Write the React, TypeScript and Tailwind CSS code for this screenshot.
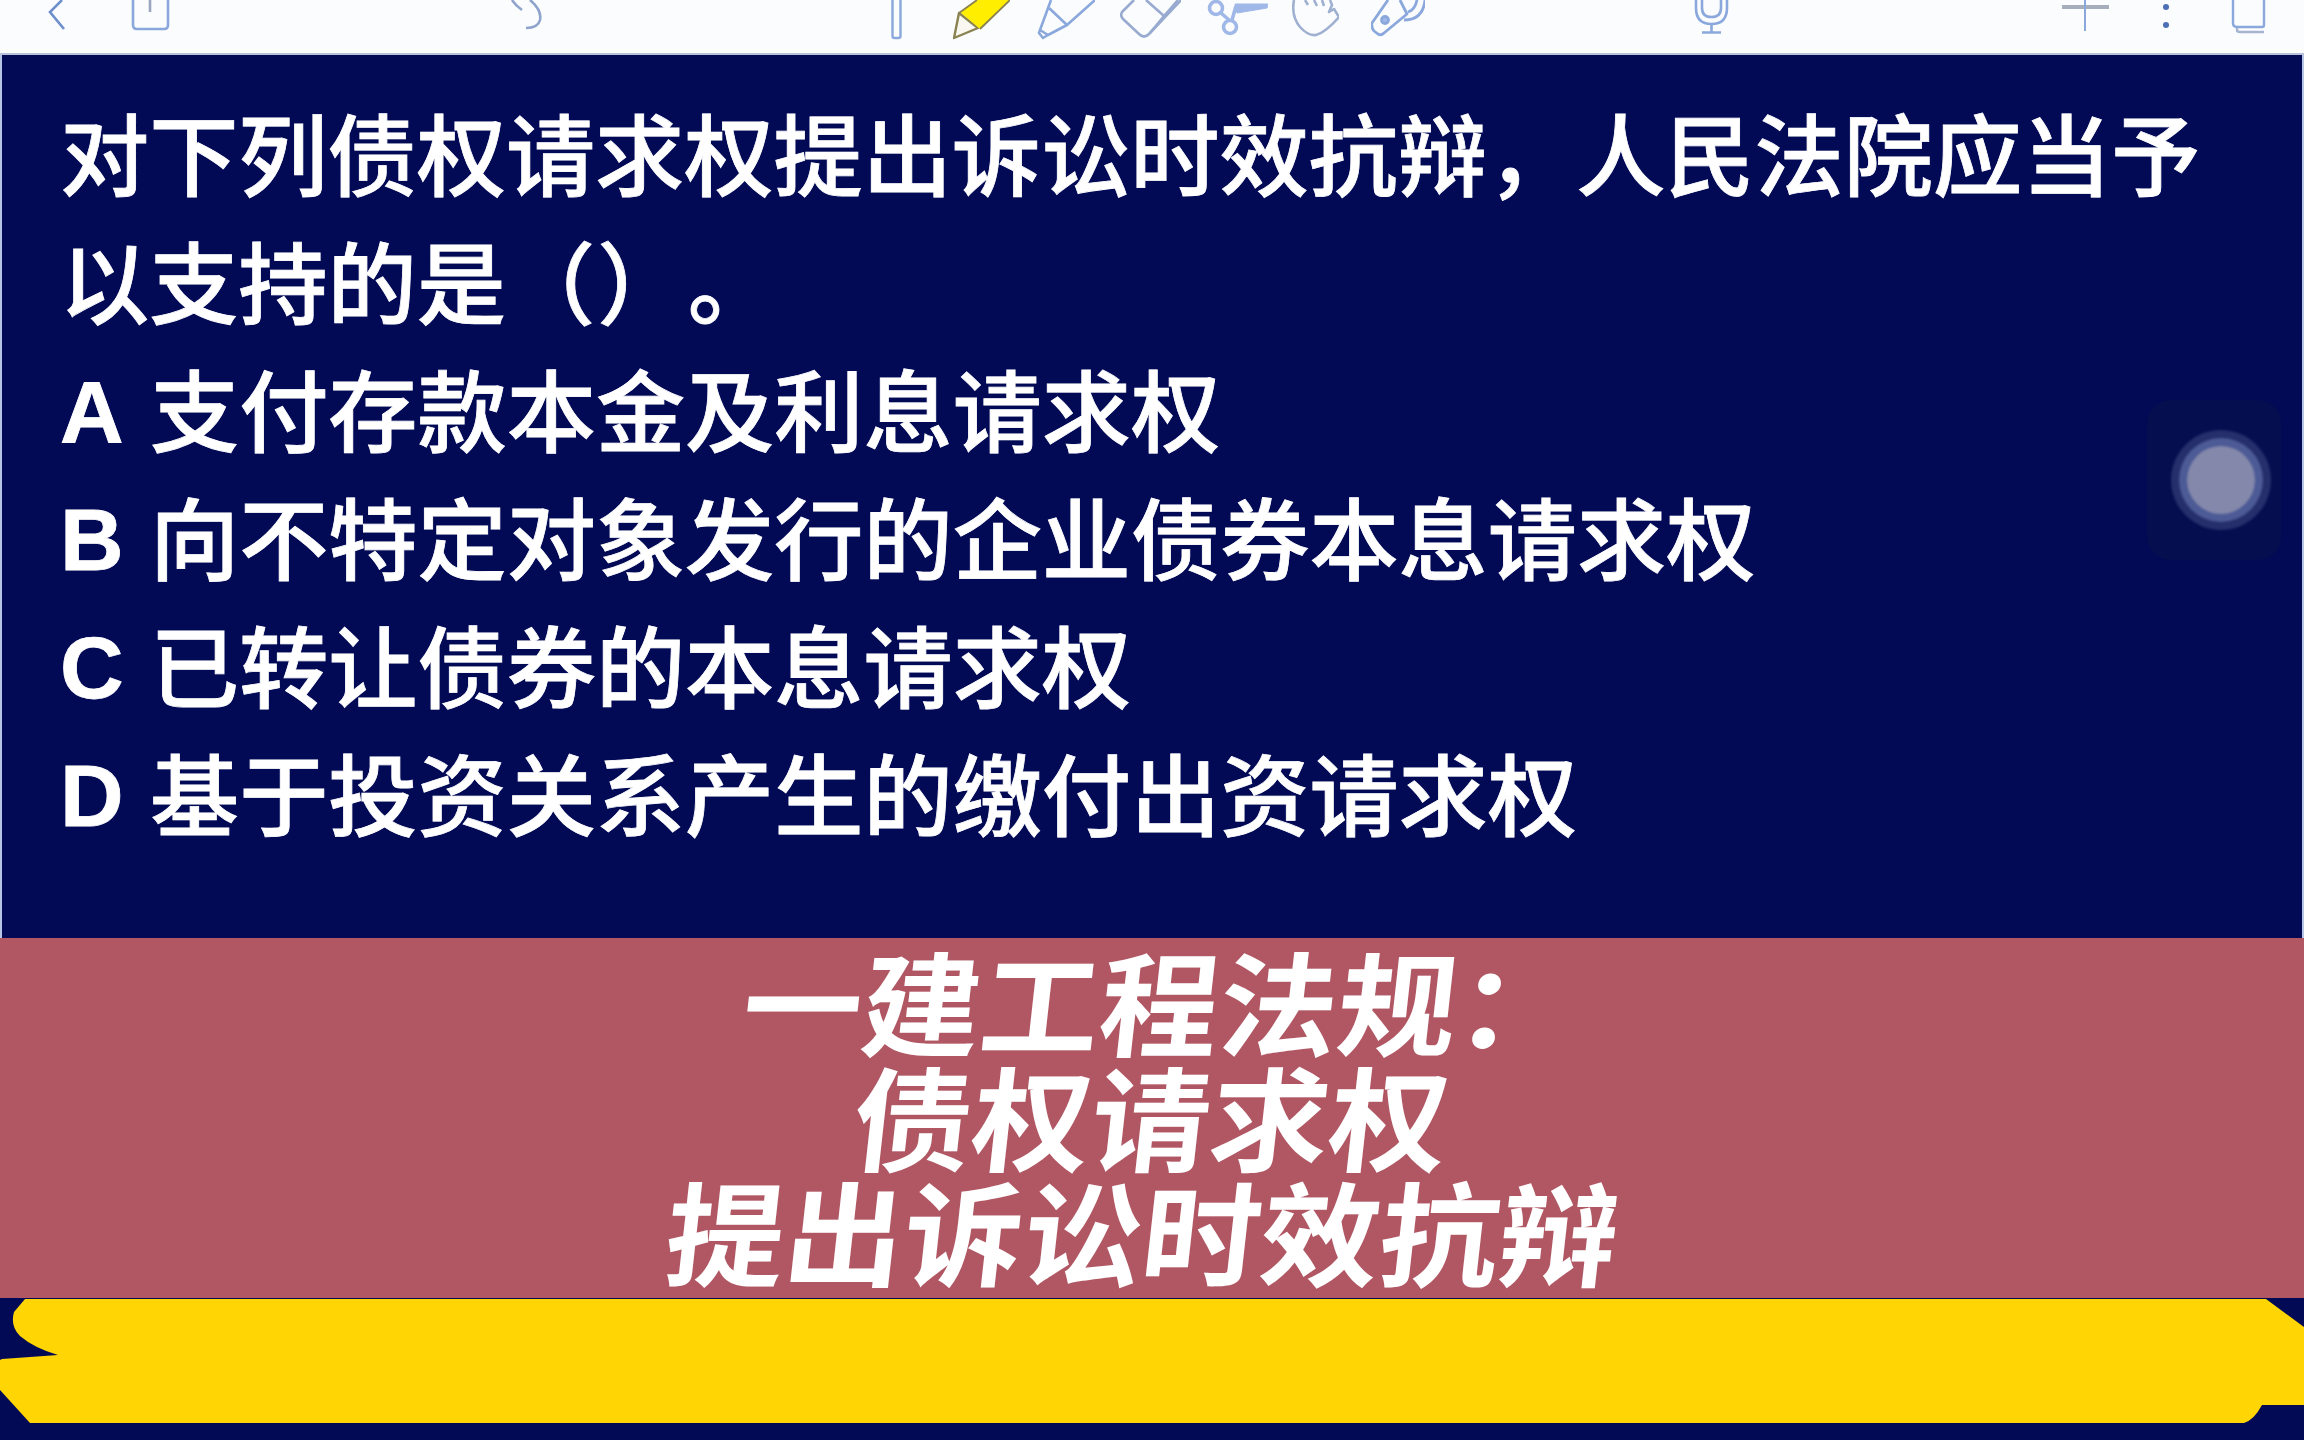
import React from "react";

const stroke = "#8ba8dc";

function Toolbar() {
  return (
    <header className="flex h-[55px] shrink-0 items-start overflow-hidden border-b-2 border-[#b9c1d8] bg-[#fbfcfe]">
      <svg className="ml-[48px] shrink-0" width="18" height="40" viewBox="0 0 18 40" fill="none" stroke="#6d8fcb" strokeWidth="2.6">
        <path d="M14 0 L2 12 L16 29" />
      </svg>
      <svg className="ml-[65px] shrink-0" width="39" height="40" viewBox="0 0 39 40" fill="none" stroke={stroke} strokeWidth="2.6">
        <path d="M2 0 V25 Q2 29 6 29 H33 Q37 29 37 25 V0" />
        <path d="M19 0 V12" stroke="#9aa6c0" />
      </svg>
      <svg className="ml-[340px] shrink-0" width="34" height="40" viewBox="0 0 34 40" fill="none" stroke="#8ea3cc" strokeWidth="2.6">
        <path d="M2 0 Q6 6 12 10" />
        <path d="M20 0 Q32 10 30 20 Q28 28 16 28" />
      </svg>
      <svg className="ml-[347px] shrink-0" width="11" height="40" viewBox="0 0 11 40" fill="none" stroke={stroke} strokeWidth="2.4">
        <path d="M1.5 0 V36 Q1.5 38 3.5 38 H7.5 Q9.5 38 9.5 36 V0" />
      </svg>
      <svg className="ml-[51px] shrink-0" width="57" height="40" viewBox="0 0 57 40">
        <path d="M6 13 L25 28 L1 38 Z" fill="#f8f8f0" stroke="#8a8250" strokeWidth="2.4" strokeLinejoin="round" />
        <path d="M24 0 H57 L27 29 L7 12 Z" fill="#ffee00" />
        <path d="M6 13 L24 0 M57 0 L27 29" stroke="#8a8250" strokeWidth="1.8" />
      </svg>
      <svg className="ml-[27px] shrink-0" width="58" height="40" viewBox="0 0 58 40" fill="none" stroke={stroke} strokeWidth="2.6" strokeLinejoin="round">
        <path d="M14 0 L3 30 L2 33 L6 38 L11 35 L30 25 L58 0" />
        <path d="M12 8 L30 25 M3 30 L11 35" />
      </svg>
      <svg className="ml-[25px] shrink-0" width="61" height="40" viewBox="0 0 61 40" fill="none" stroke="#98aad0" strokeWidth="2.6" strokeLinejoin="round">
        <path d="M14 0 L2 12 Q0 16 3 19 L19 34 Q24 39 29 34 L61 0" />
        <path d="M26 0 L44 16 L30 33 M44 16 L58 0" />
      </svg>
      <svg className="ml-[26px] shrink-0" width="61" height="40" viewBox="0 0 61 40" fill="none" stroke="#a0b8e8" strokeWidth="3.6">
        <circle cx="9" cy="8" r="6.5" />
        <circle cx="23" cy="27" r="6.5" />
        <path d="M14 13 L22 20 M25 20 L29 6" />
        <path d="M28 4 H61 L60 8 L30 13 Z" fill="#a0b8e8" strokeWidth="1" />
      </svg>
      <svg className="ml-[24px] shrink-0" width="47" height="40" viewBox="0 0 47 40" fill="none" stroke="#9fb0d0" strokeWidth="2.6" strokeLinejoin="round">
        <path d="M2 0 Q-1 16 8 27 Q16 36 24 35 Q34 32 47 17 L42 9 L37 12 L40 5 L38 0" />
        <path d="M13 0 L16 5 M22 0 L25 6 M30 0 L32 6" />
      </svg>
      <svg className="ml-[32px] shrink-0" width="54" height="40" viewBox="0 0 54 40" fill="none" stroke={stroke} strokeWidth="2.8" strokeLinejoin="round">
        <path d="M17 0 L1 23 Q0 27 3 31 L7 34 Q10 36 13 33 L36 14 L29 0" />
        <circle cx="14" cy="20" r="3.5" fill="#a0b8e8" />
        <path d="M33 20 Q52 20 54 0 M37 12 Q44 10 46 0" />
      </svg>
      <svg className="ml-[269px] shrink-0" width="35" height="40" viewBox="0 0 35 40" fill="none" stroke={stroke} strokeWidth="2.6">
        <path d="M2 0 V8 Q2 24 17.5 24 Q33 24 33 8 V0" />
        <path d="M8 0 V8 Q8 17 17.5 17 Q27 17 27 8 V0" />
        <path d="M17.5 24 V32 M8 32.5 H27" />
      </svg>
      <svg className="ml-[333px] shrink-0" width="47" height="40" viewBox="0 0 47 40" fill="none">
        <path d="M0 7 H47" stroke="#a6adbd" strokeWidth="4" />
        <path d="M23 0 V31" stroke="#8ba8dc" strokeWidth="2" />
      </svg>
      <svg className="ml-[53px] shrink-0" width="8" height="40" viewBox="0 0 8 40" fill="#4a6fb5">
        <circle cx="4" cy="7" r="3" />
        <circle cx="4" cy="25" r="3" />
      </svg>
      <svg className="ml-[61px] shrink-0" width="35" height="40" viewBox="0 0 35 40" fill="none" stroke={stroke} strokeWidth="2.4">
        <path d="M2 0 V23 Q2 27 6 27 H31 Q33 27 33 25 V0" />
        <path d="M6 28 V30 Q6 32 9 32 H33" stroke="#a6b4d2" />
      </svg>
    </header>
  );
}

const options = [
  ["A", "支付存款本金及利息请求权"],
  ["B", "向不特定对象发行的企业债券本息请求权"],
  ["C", "已转让债券的本息请求权"],
  ["D", "基于投资关系产生的缴付出资请求权"],
];

function Question() {
  return (
    <section className="relative h-[883px] shrink-0 border-x-2 border-x-[#b8c4e4] bg-[#020a55] pl-[58px] pt-[32px] font-['Noto_Sans_CJK_SC',sans-serif] text-[89.2px] font-medium leading-[128px] text-white [-webkit-text-stroke:0.8px_white]">
      <p className="whitespace-nowrap">对下列债权请求权提出诉讼时效抗辩，人民法院应当予</p>
      <p className="whitespace-nowrap">
        以支持的是（<span className="ml-[2px]">）</span>
        <span className="ml-[46px]">。</span>
      </p>
      {options.map(([letter, text]) => (
        <p key={letter} className="flex whitespace-nowrap">
          <span className="w-[90px] shrink-0 translate-y-[5px] font-['Liberation_Sans',sans-serif] text-[88px] font-bold">{letter}</span>
          <span>{text}</span>
        </p>
      ))}
      <div className="absolute left-[2145px] top-[345px] flex h-[160px] w-[134px] items-center rounded-[24px] bg-[#050f50] pl-[24px]">
        <div className="flex h-[100px] w-[100px] items-center justify-center rounded-full bg-[#252f6c] blur-[1px]">
          <div className="flex h-[84px] w-[84px] items-center justify-center rounded-full bg-[#4c5a96]">
            <div className="h-[68px] w-[68px] rounded-full bg-[#8488aa]" />
          </div>
        </div>
      </div>
    </section>
  );
}

function Title() {
  return (
    <section className="flex h-[360px] shrink-0 items-center justify-center bg-[#b05763]">
      <div className="flex -translate-y-[4px] scale-y-95 -skew-x-6 flex-col items-center font-['Noto_Sans_CJK_SC',sans-serif] text-[119px] font-bold leading-[121px] text-white">
        <p className="mr-[8px]">一建工程法规：</p>
        <p>债权请求权</p>
        <p className="ml-[8px]">提出诉讼时效抗辩</p>
      </div>
    </section>
  );
}

function Band() {
  return (
    <svg className="block h-[142px] w-full shrink-0" viewBox="0 0 2304 142">
      <path
        d="M25 1 L14 14 Q10 28 20 38 Q34 50 58 57 L2 61 L0 62 V92 L30 125 H2244 Q2254 122 2262 107 H2304 V29 L2266 1 Z"
        fill="#ffd503"
      />
    </svg>
  );
}

export default function App() {
  return (
    <main className="flex h-[1440px] w-[2304px] flex-col overflow-hidden bg-[#020a55] blur-[0.7px]">
      <Toolbar />
      <Question />
      <Title />
      <Band />
    </main>
  );
}
